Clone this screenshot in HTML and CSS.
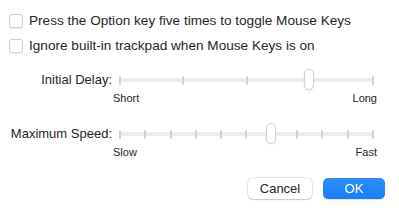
FILE: index.html
```html
<!DOCTYPE html>
<html lang="en">
<head>
    <meta charset="UTF-8">
    <title>Mouse Keys Options</title>
    <link rel="stylesheet" href="styles.css">
</head>
<body>
    <div class="sheet">
        <div class="options">
            <label class="check-row">
                <span class="check-box"></span>
                <span>Press the Option key five times to toggle Mouse Keys</span>
            </label>
            <label class="check-row">
                <span class="check-box"></span>
                <span>Ignore built-in trackpad when Mouse Keys is on</span>
            </label>
        </div>

        <div class="slider-grid">
            <div class="slider-label">Initial Delay:</div>
            <div class="slider">
                <div class="track">
                    <span class="tick"></span><span class="tick"></span><span class="tick"></span><span class="tick"></span><span class="tick"></span>
                    <div class="thumb" style="left: 74.5%"></div>
                </div>
            </div>
            <div></div>
            <div class="scale"><span>Short</span><span>Long</span></div>

            <div class="slider-label second">Maximum Speed:</div>
            <div class="slider second">
                <div class="track">
                    <span class="tick"></span><span class="tick"></span><span class="tick"></span><span class="tick"></span><span class="tick"></span><span class="tick"></span><span class="tick"></span><span class="tick"></span><span class="tick"></span><span class="tick"></span><span class="tick"></span>
                    <div class="thumb" style="left: 59.8%"></div>
                </div>
            </div>
            <div></div>
            <div class="scale"><span>Slow</span><span>Fast</span></div>
        </div>

        <div class="buttons">
            <button class="btn cancel">Cancel</button>
            <button class="btn ok">OK</button>
        </div>
    </div>
</body>
</html>
```

FILE: styles.css
```css
body {
    margin: 0;
    background: #ffffff;
    font-family: "Liberation Sans", Arial, sans-serif;
    font-size: 13px;
    color: #262626;
}

.sheet {
    width: 399px;
    height: 211px;
    overflow: hidden;
}

.options {
    padding: 8px 0 0 9px;
    font-size: 13.6px;
}

.check-row {
    display: flex;
    align-items: center;
    gap: 6px;
    height: 25px;
}

.check-box {
    box-sizing: border-box;
    width: 14px;
    height: 14px;
    border: 1px solid #cfcfcf;
    border-radius: 3px;
    background: #ffffff;
    box-shadow: 0 0.5px 1px rgba(0, 0, 0, 0.08);
}

.slider-grid {
    display: grid;
    grid-template-columns: 112px 263px;
    column-gap: 3px;
    margin-top: 11px;
}

.slider-label {
    text-align: right;
    height: 21px;
    line-height: 21px;
}

.slider {
    position: relative;
    height: 21px;
}

.second {
    margin-top: 18px;
}

.track {
    position: absolute;
    left: 4px;
    right: 4px;
    top: 9px;
    height: 4px;
    border-radius: 2px;
    background: #ececec;
    display: flex;
    justify-content: space-between;
    align-items: center;
}

.tick {
    width: 2px;
    height: 9px;
    border-radius: 1px;
    background: #d2d2d2;
}

/* thumb sits over the track, centred on its value */
.thumb {
    position: absolute;
    top: -9px;
    width: 10px;
    height: 21px;
    margin-left: -5px;
    box-sizing: border-box;
    border: 1px solid #d4d4d4;
    border-radius: 5px;
    background: #ffffff;
    box-shadow: 0 0.5px 1.5px rgba(0, 0, 0, 0.12);
}

.scale {
    display: flex;
    justify-content: space-between;
    margin: 2px 1px 0 -2px;
    font-size: 11px;
    line-height: 13px;
}

.buttons {
    display: flex;
    justify-content: flex-end;
    gap: 11px;
    margin: 19px 14px 0 0;
}

.btn {
    font-family: "Liberation Sans", Arial, sans-serif;
    font-size: 13px;
    height: 21px;
    padding: 0;
    border-radius: 5px;
    cursor: pointer;
}

.cancel {
    width: 64px;
    border: none;
    background: #ffffff;
    color: #262626;
    box-shadow: 0 0 0 0.5px rgba(0, 0, 0, 0.18), 0 1px 1.5px rgba(0, 0, 0, 0.14);
}

.ok {
    width: 62px;
    border: none;
    color: #ffffff;
    background: linear-gradient(#2e8ffc, #1a7cf8);
    box-shadow: 0 1px 1.5px rgba(0, 0, 0, 0.12);
}
```
